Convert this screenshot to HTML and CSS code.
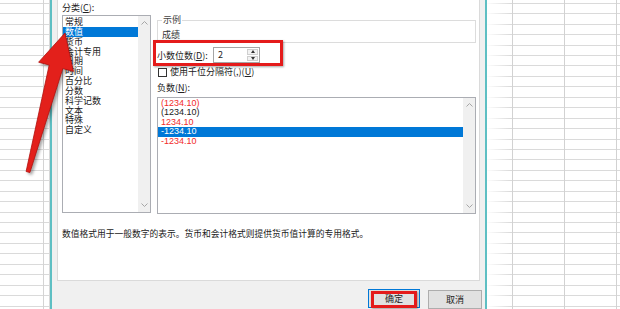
FILE: index.html
```html
<!DOCTYPE html>
<html lang="zh-CN">
<head>
    <meta charset="UTF-8">
    <title>设置单元格格式 - 数值</title>
    <link rel="stylesheet" href="styles.css">
</head>
<body>
    <div class="screen">
        <div class="sheet sheet-left"></div>
        <div class="teal"></div>

        <div class="dialog">
            <div class="panel">
                <div class="cols">
                    <div class="col-left">
                        <div class="label">分类(<u>C</u>):</div>
                        <div class="listbox cat-list">
                            <ul>
                                <li>常规</li>
                                <li class="sel">数值</li>
                                <li>货币</li>
                                <li>会计专用</li>
                                <li>日期</li>
                                <li>时间</li>
                                <li>百分比</li>
                                <li>分数</li>
                                <li>科学记数</li>
                                <li>文本</li>
                                <li>特殊</li>
                                <li>自定义</li>
                            </ul>
                            <div class="vscroll">
                                <svg width="7" height="4" viewBox="0 0 7 4"><polyline points="0.5,3.5 3.5,0.5 6.5,3.5" fill="none" stroke="#a6a6a6" stroke-width="1"/></svg>
                                <svg width="7" height="4" viewBox="0 0 7 4"><polyline points="0.5,0.5 3.5,3.5 6.5,0.5" fill="none" stroke="#a6a6a6" stroke-width="1"/></svg>
                            </div>
                        </div>
                    </div>

                    <div class="col-right">
                        <fieldset class="sample">
                            <legend>示例</legend>
                            <div class="sample-text">成绩</div>
                        </fieldset>

                        <div class="decimals">
                            <label class="decimals-label">小数位数(<u>D</u>):</label>
                            <div class="spin">
                                <span class="spin-val">2</span>
                                <div class="spin-btns">
                                    <span class="spin-btn"><i class="tri-up"></i></span>
                                    <span class="spin-btn"><i class="tri-down"></i></span>
                                </div>
                            </div>
                        </div>

                        <div class="check-row">
                            <span class="checkbox"></span>
                            <span>使用千位分隔符(,)(<u>U</u>)</span>
                        </div>

                        <div class="neg-label">负数(<u>N</u>):</div>
                        <div class="listbox neg-list">
                            <ul>
                                <li class="red">(1234.10)</li>
                                <li>(1234.10)</li>
                                <li class="red">1234.10</li>
                                <li class="sel">-1234.10</li>
                                <li class="red">-1234.10</li>
                            </ul>
                            <div class="vscroll">
                                <svg width="7" height="4" viewBox="0 0 7 4"><polyline points="0.5,3.5 3.5,0.5 6.5,3.5" fill="none" stroke="#a6a6a6" stroke-width="1"/></svg>
                                <svg width="7" height="4" viewBox="0 0 7 4"><polyline points="0.5,0.5 3.5,3.5 6.5,0.5" fill="none" stroke="#a6a6a6" stroke-width="1"/></svg>
                            </div>
                        </div>
                    </div>
                </div>

                <p class="desc">数值格式用于一般数字的表示。货币和会计格式则提供货币值计算的专用格式。</p>
            </div>

            <div class="buttons">
                <button class="btn btn-ok">确定</button>
                <button class="btn btn-cancel">取消</button>
            </div>
        </div>

        <div class="teal"></div>
        <div class="sheet sheet-right"></div>

        <!-- annotations drawn on top of the screenshot -->
        <div class="mark mark-decimals"></div>
        <div class="mark mark-ok"></div>
        <svg class="arrow" width="620" height="309" viewBox="0 0 620 309">
            <polygon points="65,33 73.4,71.4 62.8,68.6 29.9,172.5 26.1,171.5 49.2,65 38.6,62.2"
                     fill="#e3201b" stroke="#b10f0c" stroke-width="0.8" stroke-linejoin="round"/>
        </svg>
    </div>
</body>
</html>
```

FILE: styles.css
```css
* {
    box-sizing: border-box;
}

body {
    margin: 0;
    width: 620px;
    height: 309px;
    overflow: hidden;
    background: #fff;
    font-family: "Noto Sans CJK SC", "Noto Sans", sans-serif;
    font-size: 9px;
    color: #222;
}

.screen {
    position: relative;
    display: flex;
    height: 309px;
}

/* spreadsheet behind the dialog */
.sheet {
    background-color: #fff;
}

.sheet-left {
    width: 50px;
    background-image:
        linear-gradient(#d4d4d4, #d4d4d4),
        linear-gradient(#d8d8d8, #d8d8d8),
        repeating-linear-gradient(to bottom, #dadada 2.8px 3.8px, transparent 3.8px 13.24px);
    background-size: 1px 100%, 1px 100%, 100% 100%;
    background-position: 43px 0, 49px 0, 0 0;
    background-repeat: no-repeat;
}

.sheet-right {
    width: 133px;
    background-image:
        linear-gradient(to right, rgba(255, 255, 255, 0.95), rgba(255, 255, 255, 0) 24px),
        repeating-linear-gradient(to right, #d2d2d2 25px 26px, transparent 26px 77px),
        repeating-linear-gradient(to bottom, #dadada 2.8px 3.8px, transparent 3.8px 13.24px);
}

.teal {
    width: 2px;
    background: #5ebfc3;
}

/* dialog */
.dialog {
    width: 433px;
    background: #f0f0f0;
    padding: 0 5px;
    display: flex;
    flex-direction: column;
}

.panel {
    height: 283px;
    background: #fff;
    border: 1px solid #dadada;
    border-top: none;
    padding: 0 3px 0 4px;
}

.cols {
    display: flex;
    gap: 6px;
}

.col-left {
    width: 89px;
    padding-top: 1px;
}

.label {
    height: 13px;
    line-height: 13px;
}

.listbox {
    display: flex;
    background: #fff;
    border: 1px solid #abadb3;
}

.listbox ul {
    flex: 1;
    list-style: none;
    margin: 0;
    padding: 0;
}

.listbox li {
    white-space: nowrap;
}

.listbox li.sel {
    background: #0078d7;
    color: #fff;
}

.vscroll {
    width: 12px;
    background: #f0f0f0;
    display: flex;
    flex-direction: column;
    justify-content: space-between;
    align-items: center;
    padding: 5px 0;
}

.vscroll svg {
    display: block;
}

.cat-list {
    margin-top: 1px;
    height: 198px;
}

.cat-list ul {
    padding-top: 1px;
}

.cat-list li {
    height: 9.85px;
    line-height: 9.85px;
    padding-left: 2px;
}

.col-right {
    width: 319px;
    padding-top: 14px;
}

.sample {
    margin: 0;
    border: 1px solid #dcdcdc;
    padding: 0 4px 1px;
}

.sample legend {
    padding: 0 1px;
    line-height: 12px;
    color: #444;
}

.sample-text {
    padding-top: 3px;
    line-height: 12px;
    color: #333;
}

.decimals {
    display: flex;
    align-items: center;
    height: 16px;
    margin-top: 4px;
}

.decimals-label {
    width: 56px;
}

.spin {
    width: 47px;
    height: 16px;
    border: 1px solid #a5a5a5;
    display: flex;
}

.spin-val {
    flex: 1;
    padding-left: 4px;
    line-height: 14px;
}

.spin-btns {
    width: 12px;
    display: flex;
    flex-direction: column;
    gap: 1px;
    padding: 1px 1px 1px 0;
}

.spin-btn {
    flex: 1;
    background: #f2f2f2;
    border: 1px solid #cfcfcf;
    display: flex;
    align-items: center;
    justify-content: center;
}

.tri-up,
.tri-down {
    width: 0;
    height: 0;
    border-left: 2.5px solid transparent;
    border-right: 2.5px solid transparent;
}

.tri-up {
    border-bottom: 3px solid #333;
}

.tri-down {
    border-top: 3px solid #333;
}

.check-row {
    display: flex;
    align-items: center;
    gap: 3px;
    height: 10px;
    margin-top: 4px;
    padding-left: 1px;
    line-height: 10px;
}

.checkbox {
    width: 9px;
    height: 9px;
    border: 1px solid #333;
    background: #fff;
}

.neg-label {
    margin-top: 5px;
    line-height: 12px;
}

.neg-list {
    margin-top: 3px;
    height: 117px;
}

.neg-list ul {
    padding-top: 0.5px;
}

.neg-list li {
    height: 9.5px;
    line-height: 9.5px;
    padding-left: 3px;
    font-family: "Liberation Sans", Arial, sans-serif;
    font-size: 9px;
}

.neg-list li.red {
    color: #f22b2b;
}

.desc {
    margin: 14px 0 0 0;
    line-height: 12px;
    font-size: 8.75px;
}

.buttons {
    display: flex;
    justify-content: flex-end;
    align-items: flex-start;
    gap: 8px;
    margin-top: 8px;
    margin-right: -2px;
}

.btn {
    height: 19px;
    padding: 0;
    font: inherit;
    line-height: 17px;
    color: #222;
    background: #e1e1e1;
    border: 1px solid #adadad;
}

.btn-ok {
    width: 52px;
    border-color: #0078d7;
}

.btn-cancel {
    width: 54px;
    margin-top: 1px;
}

/* red annotations */
.mark {
    position: absolute;
    border: 3px solid #e41b1b;
    box-shadow: 1px 1px 2px rgba(0, 0, 0, 0.35);
}

.mark-decimals {
    left: 153px;
    top: 40px;
    width: 130px;
    height: 26px;
}

.mark-ok {
    left: 371px;
    top: 291px;
    width: 46px;
    height: 17px;
}

.arrow {
    position: absolute;
    left: 0;
    top: 0;
    pointer-events: none;
    filter: drop-shadow(2px 2px 1.5px rgba(0, 0, 0, 0.35));
}
```
